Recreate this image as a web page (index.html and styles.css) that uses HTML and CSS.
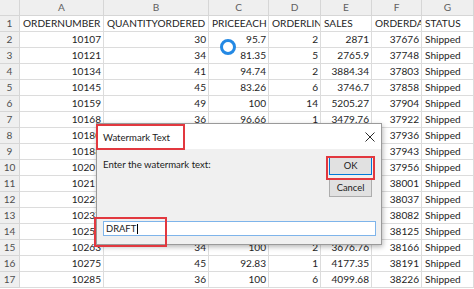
FILE: index.html
```html
<!DOCTYPE html>
<html>
<head>
<meta charset="utf-8">
<link rel="stylesheet" href="styles.css">
</head>
<body>
<div class="sheet">
  <div class="c h corner"></div><div class="c h">A</div><div class="c h">B</div><div class="c h">C</div><div class="c h">D</div><div class="c h">E</div><div class="c h">F</div><div class="c h">G</div>

  <div class="c h r">1</div><div class="c">ORDERNUMBER</div><div class="c">QUANTITYORDERED</div><div class="c">PRICEEACH</div><div class="c">ORDERLINENUMBER</div><div class="c">SALES</div><div class="c">ORDERDATE</div><div class="c">STATUS</div>
  <div class="c h r">2</div><div class="c n">10107</div><div class="c n">30</div><div class="c n">95.7</div><div class="c n">2</div><div class="c n">2871</div><div class="c n">37676</div><div class="c">Shipped</div>
  <div class="c h r">3</div><div class="c n">10121</div><div class="c n">34</div><div class="c n">81.35</div><div class="c n">5</div><div class="c n">2765.9</div><div class="c n">37748</div><div class="c">Shipped</div>
  <div class="c h r">4</div><div class="c n">10134</div><div class="c n">41</div><div class="c n">94.74</div><div class="c n">2</div><div class="c n">3884.34</div><div class="c n">37803</div><div class="c">Shipped</div>
  <div class="c h r">5</div><div class="c n">10145</div><div class="c n">45</div><div class="c n">83.26</div><div class="c n">6</div><div class="c n">3746.7</div><div class="c n">37858</div><div class="c">Shipped</div>
  <div class="c h r">6</div><div class="c n">10159</div><div class="c n">49</div><div class="c n">100</div><div class="c n">14</div><div class="c n">5205.27</div><div class="c n">37904</div><div class="c">Shipped</div>
  <div class="c h r">7</div><div class="c n">10168</div><div class="c n">36</div><div class="c n">96.66</div><div class="c n">1</div><div class="c n">3479.76</div><div class="c n">37922</div><div class="c">Shipped</div>
  <div class="c h r">8</div><div class="c n">10180</div><div class="c n">29</div><div class="c n">86.13</div><div class="c n">9</div><div class="c n">2497.77</div><div class="c n">37936</div><div class="c">Shipped</div>
  <div class="c h r">9</div><div class="c n">10188</div><div class="c n">48</div><div class="c n">100</div><div class="c n">1</div><div class="c n">5512.32</div><div class="c n">37943</div><div class="c">Shipped</div>
  <div class="c h r">10</div><div class="c n">10201</div><div class="c n">22</div><div class="c n">98.57</div><div class="c n">2</div><div class="c n">2168.54</div><div class="c n">37956</div><div class="c">Shipped</div>
  <div class="c h r">11</div><div class="c n">10211</div><div class="c n">41</div><div class="c n">100</div><div class="c n">14</div><div class="c n">4708.44</div><div class="c n">38001</div><div class="c">Shipped</div>
  <div class="c h r">12</div><div class="c n">10223</div><div class="c n">37</div><div class="c n">100</div><div class="c n">1</div><div class="c n">3965.66</div><div class="c n">38037</div><div class="c">Shipped</div>
  <div class="c h r">13</div><div class="c n">10237</div><div class="c n">23</div><div class="c n">100</div><div class="c n">7</div><div class="c n">2333.12</div><div class="c n">38082</div><div class="c">Shipped</div>
  <div class="c h r">14</div><div class="c n">10251</div><div class="c n">28</div><div class="c n">100</div><div class="c n">2</div><div class="c n">3188.64</div><div class="c n">38125</div><div class="c">Shipped</div>
  <div class="c h r">15</div><div class="c n">10263</div><div class="c n">34</div><div class="c n">100</div><div class="c n">2</div><div class="c n">3676.76</div><div class="c n">38166</div><div class="c">Shipped</div>
  <div class="c h r">16</div><div class="c n">10275</div><div class="c n">45</div><div class="c n">92.83</div><div class="c n">1</div><div class="c n">4177.35</div><div class="c n">38191</div><div class="c">Shipped</div>
  <div class="c h r">17</div><div class="c n">10285</div><div class="c n">36</div><div class="c n">100</div><div class="c n">6</div><div class="c n">4099.68</div><div class="c n">38226</div><div class="c">Shipped</div>
</div>

<div class="pointer"></div>

<div class="dialog">
  <div class="titlebar">
    <span class="title">Watermark Text</span>
    <svg class="close" width="10" height="10" viewBox="0 0 10 10"><path d="M0.5 0.5L9.5 9.5M9.5 0.5L0.5 9.5" stroke="#2b2b2b" stroke-width="1"/></svg>
  </div>
  <div class="body">
    <div class="toprow">
      <span class="label">Enter the watermark text:</span>
      <div class="buttons">
        <div class="btn ok">OK</div>
        <div class="btn">Cancel</div>
      </div>
    </div>
    <div class="input">DRAFT<span class="caret"></span></div>
  </div>
  <div class="mark mark-title"></div>
  <div class="mark mark-ok"></div>
  <div class="mark mark-input"></div>
</div>
</body>
</html>
```

FILE: styles.css
```css
html, body {
  margin: 0;
  padding: 0;
}
body {
  width: 474px;
  height: 289px;
  overflow: hidden;
  background: #ffffff;
  font-family: Lato, "Liberation Sans", sans-serif;
  position: relative;
}
.sheet {
  display: grid;
  grid-template-columns: 20px 84px 105px 60px 52px 51px 50px 52px;
  grid-auto-rows: 16px;
}
.c {
  box-sizing: border-box;
  border-right: 1px solid #dcdcdc;
  border-bottom: 1px solid #dcdcdc;
  font-size: 10.1px;
  line-height: 15px;
  padding: 0 2px 0 3px;
  white-space: nowrap;
  overflow: hidden;
  color: #1e1e1e;
}
.n {
  text-align: right;
  padding-right: 2px;
}
.h {
  background: #efefef;
  color: #606060;
  text-align: center;
  padding: 0;
  border-color: #d6d6d6;
}
.r {
  color: #505050;
}
.pointer {
  position: absolute;
  left: 220px;
  top: 39px;
  width: 10px;
  height: 10px;
  border: 3px solid #2489e4;
  border-radius: 50%;
  background: #ffffff;
}
.dialog {
  position: absolute;
  left: 96px;
  top: 123px;
  width: 286px;
  height: 122px;
  box-sizing: border-box;
  border: 1px solid #9a9a9a;
  background: #f0f0f0;
  box-shadow: 1px 2px 5px rgba(0, 0, 0, 0.28);
  display: flex;
  flex-direction: column;
  font-family: Lato, "Liberation Sans", sans-serif;
  color: #1b1b1b;
}
.titlebar {
  height: 25px;
  background: #ffffff;
  display: flex;
  align-items: center;
  justify-content: space-between;
  padding: 1px 6px 0 6px;
  box-sizing: border-box;
}
.title {
  font-size: 9.6px;
}
.close {
  display: block;
}
.body {
  flex: 1;
  display: flex;
  flex-direction: column;
  padding: 8px 5px 0 6px;
}
.toprow {
  display: flex;
  justify-content: space-between;
  align-items: flex-start;
}
.label {
  font-size: 9.6px;
  line-height: 12px;
  margin-top: 2px;
}
.buttons {
  display: flex;
  flex-direction: column;
  gap: 4px;
  margin-right: 4px;
}
.btn {
  box-sizing: border-box;
  width: 43px;
  height: 18px;
  border: 1px solid #adadad;
  background: #e1e1e1;
  font-size: 9.4px;
  line-height: 16px;
  text-align: center;
}
.btn.ok {
  border-color: #0078d7;
}
.input {
  margin-top: 24px;
  box-sizing: border-box;
  height: 15px;
  border: 1px solid #7eb4ea;
  background: #ffffff;
  font-size: 9.4px;
  line-height: 13px;
  padding-left: 2px;
  display: flex;
  align-items: center;
}
.caret {
  display: inline-block;
  width: 1px;
  height: 10px;
  background: #000;
  margin-left: 1px;
}
.mark {
  position: absolute;
  box-sizing: border-box;
  border: 2px solid #e2383f;
}
.mark-title {
  left: -1px;
  top: 0px;
  width: 89px;
  height: 26px;
}
.mark-ok {
  left: 229px;
  top: 32px;
  width: 49px;
  height: 24px;
}
.mark-input {
  left: -3px;
  top: 93px;
  width: 73px;
  height: 30px;
}
```
